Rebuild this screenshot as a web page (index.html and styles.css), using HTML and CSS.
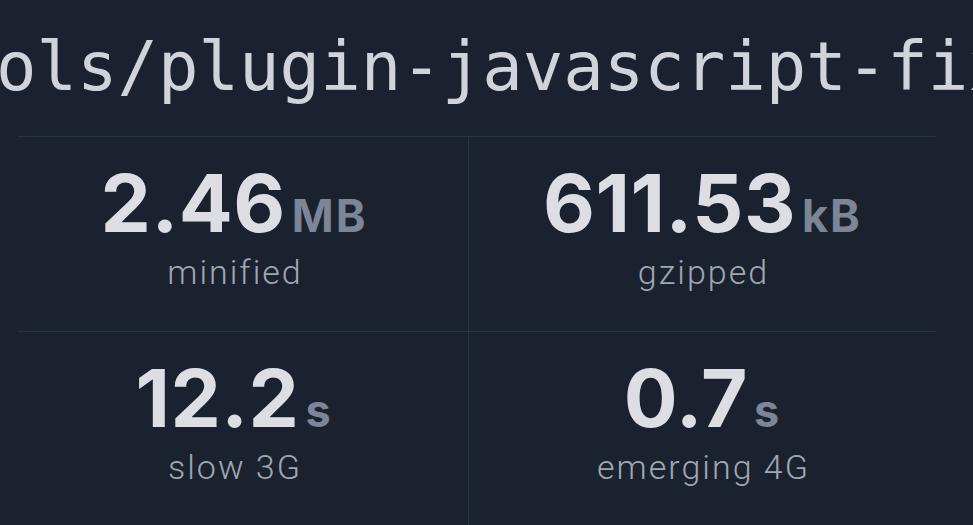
FILE: index.html
```html
<!DOCTYPE html>
<html lang="en">
<head>
    <meta charset="UTF-8">
    <meta name="viewport" content="width=device-width, initial-scale=1.0">
    <title>Package size</title>
    <link rel="stylesheet" href="styles.css">
</head>
<body>
    <header class="package-header">
        <h1 class="package-name">ols/plugin-javascript-fix</h1>
    </header>

    <section class="stats">
        <div class="stat">
            <div class="stat-value">2.46<span class="stat-unit">MB</span></div>
            <div class="stat-label">minified</div>
        </div>
        <div class="stat">
            <div class="stat-value">611.53<span class="stat-unit">kB</span></div>
            <div class="stat-label">gzipped</div>
        </div>
        <div class="stat">
            <div class="stat-value">12.2<span class="stat-unit">s</span></div>
            <div class="stat-label">slow 3G</div>
        </div>
        <div class="stat">
            <div class="stat-value">0.7<span class="stat-unit">s</span></div>
            <div class="stat-label">emerging 4G</div>
        </div>
    </section>
</body>
</html>
```

FILE: styles.css
```css
body {
    font-family: 'Inter', 'Roboto', sans-serif;
    margin: 0;
    padding: 0;
    background-color: #1a2230;
    color: #d8dbe0;
    overflow: hidden;
}

.package-header {
    padding-top: 27px;
    margin-bottom: 29px;
    overflow: hidden;
}

.package-name {
    margin: 0;
    font-family: 'DejaVu Sans Mono', 'Liberation Mono', monospace;
    font-size: 67.3px;
    font-weight: normal;
    line-height: 80px;
    color: #d0d4da;
    white-space: nowrap;
    text-indent: -4px;
}

.stats {
    display: grid;
    grid-template-columns: 468px 468px;
    grid-auto-rows: 195px;
}

.stat {
    text-align: center;
    padding-top: 27px;
    background: linear-gradient(#2a3341, #2a3341) right top / calc(100% - 18px) 1px no-repeat;
}

.stat:nth-child(even) {
    border-left: 1px solid #2a3341;
    background-size: 100% 1px;
}

.stat-value {
    font-size: 80px;
    font-weight: 700;
    line-height: 1;
    color: #dcdee3;
    letter-spacing: 0.5px;
}

.stat-unit {
    margin-left: 6px;
    font-size: 45px;
    color: #7c8696;
    letter-spacing: 2px;
}

.stat-label {
    margin-top: 10px;
    padding-left: 2px;
    font-family: 'Roboto', 'Inter', sans-serif;
    font-size: 34px;
    font-weight: 300;
    line-height: 38px;
    color: #a0a7b1;
    letter-spacing: 2px;
}
```
